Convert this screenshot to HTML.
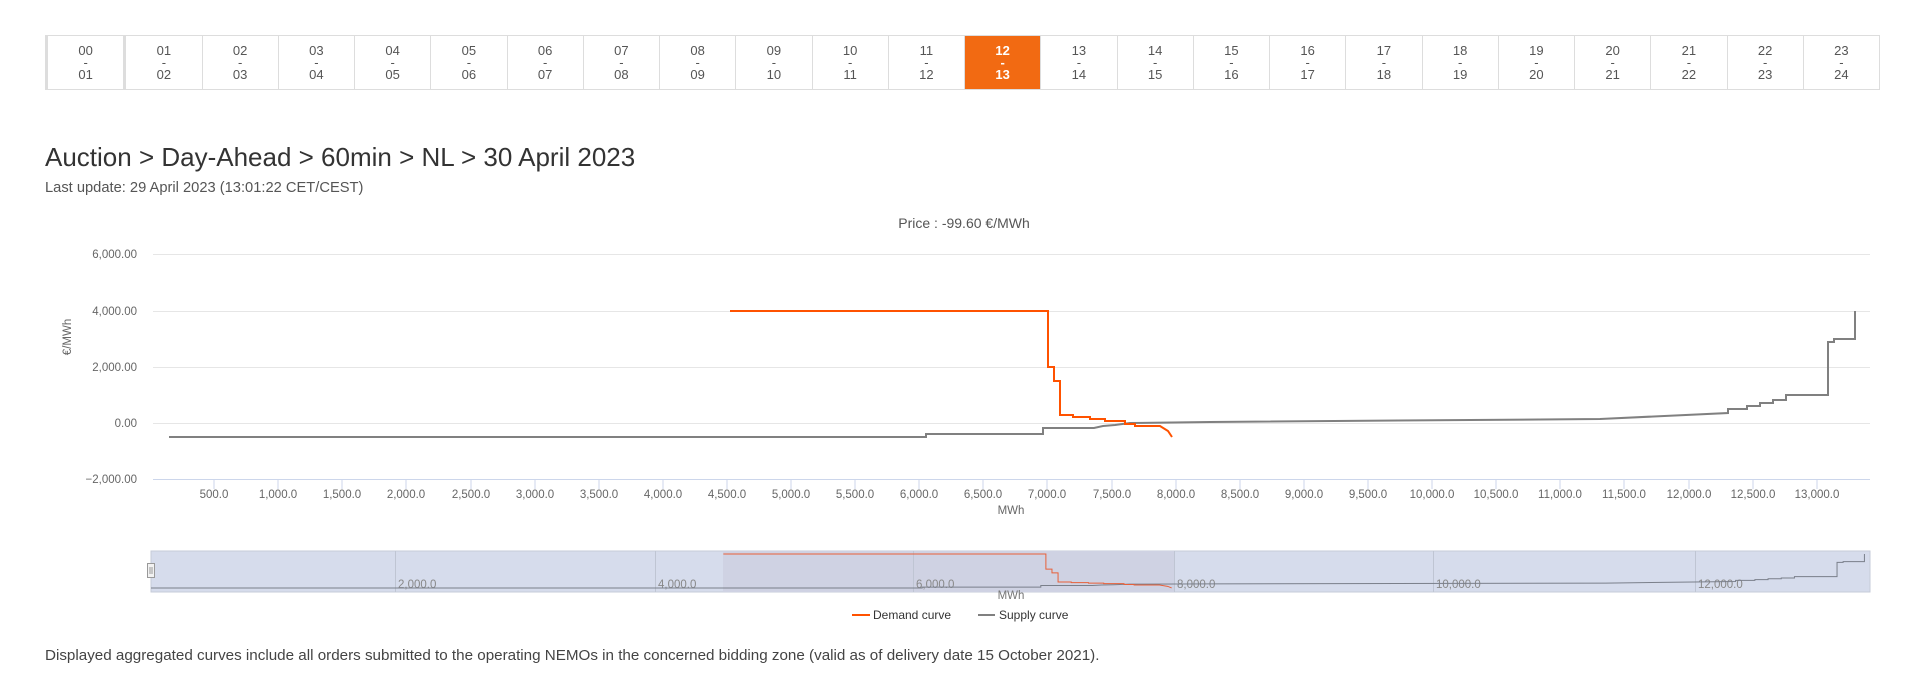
<!DOCTYPE html>
<html><head><meta charset="utf-8"><style>
body{margin:0;width:1913px;height:677px;background:#fff;font-family:"Liberation Sans",sans-serif;position:relative;overflow:hidden}
.tabs{position:absolute;left:45px;top:35px;width:1835px;height:55px;display:flex;border:1px solid #ddd;box-sizing:border-box;border-left:3px solid #ddd}
.tabs div{flex:1;border-right:1px solid #ddd;text-align:center;color:#555;font-size:13px;line-height:12px;padding-top:9px;box-sizing:border-box}
.tabs div:first-child{border-right:3px solid #ddd}
.tabs div:last-child{border-right:none}
.tabs div.sel{background:#f26a12;color:#fff;font-weight:bold}
h1{position:absolute;left:45px;top:142px;margin:0;font-weight:normal;font-size:26px;color:#333;white-space:nowrap}
.upd{position:absolute;left:45px;top:180px;font-size:14.7px;color:#555}
.foot{position:absolute;left:45px;top:647px;font-size:15.2px;color:#444;white-space:nowrap}
svg{position:absolute;left:0;top:0}
</style></head><body>
<div class="tabs">
<div>00<br>-<br>01</div><div>01<br>-<br>02</div><div>02<br>-<br>03</div><div>03<br>-<br>04</div><div>04<br>-<br>05</div><div>05<br>-<br>06</div><div>06<br>-<br>07</div><div>07<br>-<br>08</div><div>08<br>-<br>09</div><div>09<br>-<br>10</div><div>10<br>-<br>11</div><div>11<br>-<br>12</div><div class="sel">12<br>-<br>13</div><div>13<br>-<br>14</div><div>14<br>-<br>15</div><div>15<br>-<br>16</div><div>16<br>-<br>17</div><div>17<br>-<br>18</div><div>18<br>-<br>19</div><div>19<br>-<br>20</div><div>20<br>-<br>21</div><div>21<br>-<br>22</div><div>22<br>-<br>23</div><div>23<br>-<br>24</div>
</div>
<h1>Auction &gt; Day-Ahead &gt; 60min &gt; NL &gt; 30 April 2023</h1>
<div class="upd">Last update: 29 April 2023 (13:01:22 CET/CEST)</div>
<svg width="1913" height="677" font-family="Liberation Sans, sans-serif">
<defs><clipPath id="nc"><rect x="151" y="551" width="1719" height="41"/></clipPath></defs>
<text x="964" y="228" font-size="14" fill="#555" text-anchor="middle">Price : -99.60 €/MWh</text>
<g stroke="#e6e6e6" stroke-width="1">
<line x1="153" x2="1870" y1="254.5" y2="254.5"/><line x1="153" x2="1870" y1="311.5" y2="311.5"/><line x1="153" x2="1870" y1="367.5" y2="367.5"/><line x1="153" x2="1870" y1="423.5" y2="423.5"/>
</g>
<line x1="153" x2="1870" y1="479.5" y2="479.5" stroke="#ccd6eb"/>
<g font-size="11.5" fill="#666" text-anchor="end">
<text x="137" y="258">6,000.00</text><text x="137" y="315">4,000.00</text><text x="137" y="371">2,000.00</text><text x="137" y="427">0.00</text><text x="137" y="483">−2,000.00</text>
</g>
<text transform="translate(71,337) rotate(-90)" font-size="11.5" fill="#666" text-anchor="middle">€/MWh</text>
<g stroke="#ccd6eb"><path d="M214 480v9M278 480v9M342 480v9M406 480v9M471 480v9M535 480v9M599 480v9M663 480v9M727 480v9M791 480v9M855 480v9M919 480v9M983 480v9M1047 480v9M1112 480v9M1176 480v9M1240 480v9M1304 480v9M1368 480v9M1432 480v9M1496 480v9M1560 480v9M1624 480v9M1689 480v9M1753 480v9M1817 480v9"/></g>
<g font-size="11.5" fill="#666" text-anchor="middle">
<text x="214" y="498">500.0</text><text x="278" y="498">1,000.0</text><text x="342" y="498">1,500.0</text><text x="406" y="498">2,000.0</text><text x="471" y="498">2,500.0</text><text x="535" y="498">3,000.0</text><text x="599" y="498">3,500.0</text><text x="663" y="498">4,000.0</text><text x="727" y="498">4,500.0</text><text x="791" y="498">5,000.0</text><text x="855" y="498">5,500.0</text><text x="919" y="498">6,000.0</text><text x="983" y="498">6,500.0</text><text x="1047" y="498">7,000.0</text><text x="1112" y="498">7,500.0</text><text x="1176" y="498">8,000.0</text><text x="1240" y="498">8,500.0</text><text x="1304" y="498">9,000.0</text><text x="1368" y="498">9,500.0</text><text x="1432" y="498">10,000.0</text><text x="1496" y="498">10,500.0</text><text x="1560" y="498">11,000.0</text><text x="1624" y="498">11,500.0</text><text x="1689" y="498">12,000.0</text><text x="1753" y="498">12,500.0</text><text x="1817" y="498">13,000.0</text>
<text x="1011" y="514">MWh</text>
</g>
<path d="M169 437H926V434H1043V428H1094L1103 426L1115 425L1130 423L1210 422L1600 419L1728 413V409H1747V406H1760V403H1773V400H1786V395H1828V342H1834V339H1855V311" fill="none" stroke="#808080" stroke-width="2"/>
<path d="M730 311H1048V367H1054V381H1060V415H1073V417H1090V419H1105V421H1125V424H1135V426H1160L1168 431L1172 437" fill="none" stroke="#ff5200" stroke-width="2"/>
<rect x="151" y="551" width="1719" height="41" fill="#d6dcec" stroke="#c6cbd8"/>
<rect x="723" y="551" width="451" height="41" fill="#cfd2e3"/>
<g stroke="#bfc5d3"><path d="M395.5 551v41M655.5 551v41M913.5 551v41M1174.5 551v41M1433.5 551v41M1695.5 551v41"/></g>
<g font-size="11.5" fill="#888"><text x="398" y="588">2,000.0</text><text x="658" y="588">4,000.0</text><text x="916" y="588">6,000.0</text><text x="1177" y="588">8,000.0</text><text x="1436" y="588">10,000.0</text><text x="1698" y="588">12,000.0</text></g>
<g clip-path="url(#nc)">
<g transform="matrix(1.0143 0 0 0.269 -17.1 470.4)">
<path d="M150 437H926V434H1043V428H1094L1103 426L1115 425L1130 423L1210 422L1600 419L1728 413V409H1747V406H1760V403H1773V400H1786V395H1828V342H1834V339H1855V311" fill="none" stroke="#7a7f8a" stroke-width="1" vector-effect="non-scaling-stroke"/>
<path d="M730 311H1048V367H1054V381H1060V415H1073V417H1090V419H1105V421H1125V424H1135V426H1160L1168 431L1172 437" fill="none" stroke="#e8603a" stroke-width="1" vector-effect="non-scaling-stroke"/>
</g></g>
<rect x="147.5" y="563.5" width="7" height="14" fill="#f2f2f2" stroke="#999"/>
<path d="M150 567v7M152 567v7" stroke="#999"/>
<text x="1011" y="599" font-size="11.5" fill="#777" text-anchor="middle">MWh</text>
<line x1="852" x2="870" y1="615" y2="615" stroke="#ff5200" stroke-width="2"/>
<text x="873" y="619" font-size="12" fill="#333">Demand curve</text>
<line x1="978" x2="995" y1="615" y2="615" stroke="#808080" stroke-width="2"/>
<text x="999" y="619" font-size="12" fill="#333">Supply curve</text>
</svg>
<div class="foot">Displayed aggregated curves include all orders submitted to the operating NEMOs in the concerned bidding zone (valid as of delivery date 15 October 2021).</div>
</body></html>
